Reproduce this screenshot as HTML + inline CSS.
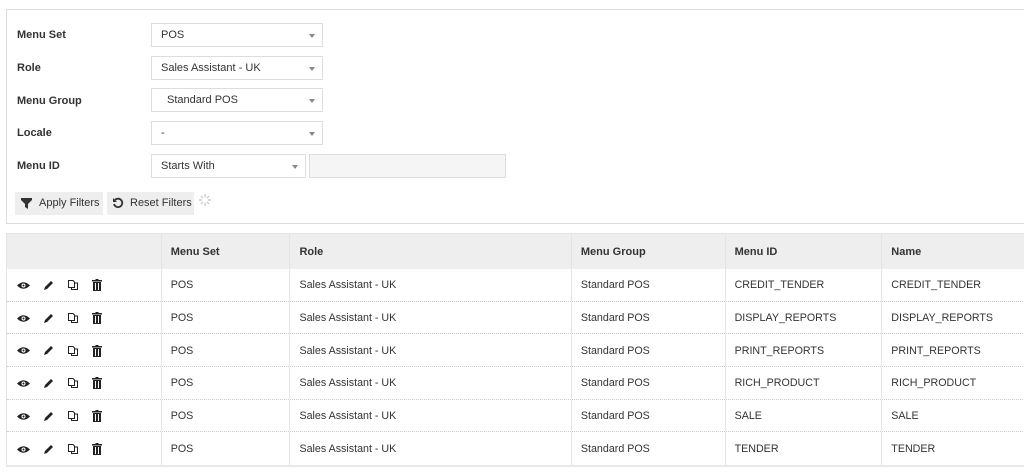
<!DOCTYPE html>
<html><head><meta charset="utf-8"><style>
*{box-sizing:border-box;margin:0;padding:0}
body{width:1024px;height:475px;background:#fff;font-family:"Liberation Sans",sans-serif;font-size:11px;color:#333;position:relative;overflow:hidden}
.panel{position:absolute;left:6px;top:9px;width:1030px;height:215px;border:1px solid #ddd}
.lbl{position:absolute;left:17px;font-weight:bold;font-size:11px;color:#333}
.sel{position:absolute;left:151px;width:172px;height:24px;border:1px solid #ddd;background:#fff;padding-left:9px;line-height:22px;font-size:11px}
.sel:after{content:"";position:absolute;right:7px;top:10px;border-left:3px solid transparent;border-right:3px solid transparent;border-top:4px solid #888}
.btn{position:absolute;top:192px;height:23px;background:#eee;line-height:23px;font-size:11px;padding-left:23px}
.tbl{position:absolute;left:6px;top:233px;width:1030px;border:1px solid #e4e4e4;border-bottom:2px solid #e8e8e8;font-size:10.7px}
.row{display:flex;height:32.7px;border-bottom:1px dotted #ccc;align-items:center}
.row:last-child{border-bottom:none}
.hd{height:35px;background:#eee;font-weight:bold;border-bottom:none;font-size:11px}
.c{height:100%;display:flex;align-items:center;padding-left:9px;border-right:1px solid #e4e4e4;padding-top:1px}
.c0{width:155px}.c1{width:129px}.c2{width:282px}.c3{width:154px}.c4{width:157px}.c5{width:153px;border-right:none}
.ic{display:flex;gap:13px;padding-left:10px;align-items:center}
</style></head><body>
<div class="panel"></div>
<div class="lbl" style="top:29px">Menu Set</div>
<div class="lbl" style="top:62px">Role</div>
<div class="lbl" style="top:95px">Menu Group</div>
<div class="lbl" style="top:127px">Locale</div>
<div class="lbl" style="top:160px">Menu ID</div>
<div class="sel" style="top:23px">POS</div>
<div class="sel" style="top:56px">Sales Assistant - UK</div>
<div class="sel" style="top:88px;padding-left:15px">Standard POS</div>
<div class="sel" style="top:121px">-</div>
<div class="sel" style="top:154px;width:155px">Starts With</div>
<div style="position:absolute;left:309px;top:154px;width:197px;height:24px;border:1px solid #ddd;background:#f5f5f5"></div>
<div class="btn" style="left:15px;width:88px;padding-left:24px"><svg style="position:absolute;left:6px;top:6px" width="11" height="11" viewBox="0 0 11 11"><path d="M0 0H11V2L7 6V11L4 9V6L0 2Z" fill="#333"/></svg>Apply Filters</div>
<div class="btn" style="left:107px;width:87px"><svg style="position:absolute;left:5px;top:5px" width="12" height="12" viewBox="0 0 12 12"><path d="M3 3A4.2 4.2 0 1 1 2 7" fill="none" stroke="#333" stroke-width="1.8"/><path d="M1 1V5H5Z" fill="#333"/></svg>Reset Filters</div>
<svg style="position:absolute;left:198px;top:193px" width="14" height="14" viewBox="0 0 14 14" stroke="#ccc" stroke-width="1.5"><path d="M7 1V4M7 10V13M1 7H4M10 7H13M3 3L5 5M9 9L11 11M11 3L9 5M5 9L3 11"/></svg>
<div class="tbl">
<div class="row hd"><div class="c c0"></div><div class="c c1">Menu Set</div><div class="c c2">Role</div><div class="c c3">Menu Group</div><div class="c c4">Menu ID</div><div class="c c5">Name</div></div>
<div class="row"><div class="c c0 ic"><svg width="13" height="9" viewBox="0 0 13 9"><path d="M0 4.5Q6.5-2 13 4.5Q6.5 11 0 4.5Z" fill="#222"/><circle cx="6.5" cy="4.5" r="2" fill="#fff"/><circle cx="6.5" cy="4.5" r="1" fill="#222"/></svg><svg width="11" height="11" viewBox="0 0 11 11"><path d="M1 10L2 7L8 1L10 3L4 9Z" fill="#222"/></svg><svg width="12" height="12" viewBox="0 0 12 12" fill="none" stroke="#222"><path d="M1.5 1.5H6L7.5 3V8.5H1.5Z"/><path d="M7.5 4H10.5V10.5H4.5V8.5"/></svg><svg width="10" height="12" viewBox="0 0 10 12" fill="#222"><rect x="0" y="1" width="10" height="1.5"/><rect x="3.5" y="0" width="3" height="1"/><rect x="1" y="3" width="8" height="9"/><rect x="3" y="4" width="1" height="7" fill="#fff"/><rect x="6" y="4" width="1" height="7" fill="#fff"/></svg></div><div class="c c1">POS</div><div class="c c2">Sales Assistant - UK</div><div class="c c3">Standard POS</div><div class="c c4">CREDIT_TENDER</div><div class="c c5">CREDIT_TENDER</div></div>
<div class="row"><div class="c c0 ic"><svg width="13" height="9" viewBox="0 0 13 9"><path d="M0 4.5Q6.5-2 13 4.5Q6.5 11 0 4.5Z" fill="#222"/><circle cx="6.5" cy="4.5" r="2" fill="#fff"/><circle cx="6.5" cy="4.5" r="1" fill="#222"/></svg><svg width="11" height="11" viewBox="0 0 11 11"><path d="M1 10L2 7L8 1L10 3L4 9Z" fill="#222"/></svg><svg width="12" height="12" viewBox="0 0 12 12" fill="none" stroke="#222"><path d="M1.5 1.5H6L7.5 3V8.5H1.5Z"/><path d="M7.5 4H10.5V10.5H4.5V8.5"/></svg><svg width="10" height="12" viewBox="0 0 10 12" fill="#222"><rect x="0" y="1" width="10" height="1.5"/><rect x="3.5" y="0" width="3" height="1"/><rect x="1" y="3" width="8" height="9"/><rect x="3" y="4" width="1" height="7" fill="#fff"/><rect x="6" y="4" width="1" height="7" fill="#fff"/></svg></div><div class="c c1">POS</div><div class="c c2">Sales Assistant - UK</div><div class="c c3">Standard POS</div><div class="c c4">DISPLAY_REPORTS</div><div class="c c5">DISPLAY_REPORTS</div></div>
<div class="row"><div class="c c0 ic"><svg width="13" height="9" viewBox="0 0 13 9"><path d="M0 4.5Q6.5-2 13 4.5Q6.5 11 0 4.5Z" fill="#222"/><circle cx="6.5" cy="4.5" r="2" fill="#fff"/><circle cx="6.5" cy="4.5" r="1" fill="#222"/></svg><svg width="11" height="11" viewBox="0 0 11 11"><path d="M1 10L2 7L8 1L10 3L4 9Z" fill="#222"/></svg><svg width="12" height="12" viewBox="0 0 12 12" fill="none" stroke="#222"><path d="M1.5 1.5H6L7.5 3V8.5H1.5Z"/><path d="M7.5 4H10.5V10.5H4.5V8.5"/></svg><svg width="10" height="12" viewBox="0 0 10 12" fill="#222"><rect x="0" y="1" width="10" height="1.5"/><rect x="3.5" y="0" width="3" height="1"/><rect x="1" y="3" width="8" height="9"/><rect x="3" y="4" width="1" height="7" fill="#fff"/><rect x="6" y="4" width="1" height="7" fill="#fff"/></svg></div><div class="c c1">POS</div><div class="c c2">Sales Assistant - UK</div><div class="c c3">Standard POS</div><div class="c c4">PRINT_REPORTS</div><div class="c c5">PRINT_REPORTS</div></div>
<div class="row"><div class="c c0 ic"><svg width="13" height="9" viewBox="0 0 13 9"><path d="M0 4.5Q6.5-2 13 4.5Q6.5 11 0 4.5Z" fill="#222"/><circle cx="6.5" cy="4.5" r="2" fill="#fff"/><circle cx="6.5" cy="4.5" r="1" fill="#222"/></svg><svg width="11" height="11" viewBox="0 0 11 11"><path d="M1 10L2 7L8 1L10 3L4 9Z" fill="#222"/></svg><svg width="12" height="12" viewBox="0 0 12 12" fill="none" stroke="#222"><path d="M1.5 1.5H6L7.5 3V8.5H1.5Z"/><path d="M7.5 4H10.5V10.5H4.5V8.5"/></svg><svg width="10" height="12" viewBox="0 0 10 12" fill="#222"><rect x="0" y="1" width="10" height="1.5"/><rect x="3.5" y="0" width="3" height="1"/><rect x="1" y="3" width="8" height="9"/><rect x="3" y="4" width="1" height="7" fill="#fff"/><rect x="6" y="4" width="1" height="7" fill="#fff"/></svg></div><div class="c c1">POS</div><div class="c c2">Sales Assistant - UK</div><div class="c c3">Standard POS</div><div class="c c4">RICH_PRODUCT</div><div class="c c5">RICH_PRODUCT</div></div>
<div class="row"><div class="c c0 ic"><svg width="13" height="9" viewBox="0 0 13 9"><path d="M0 4.5Q6.5-2 13 4.5Q6.5 11 0 4.5Z" fill="#222"/><circle cx="6.5" cy="4.5" r="2" fill="#fff"/><circle cx="6.5" cy="4.5" r="1" fill="#222"/></svg><svg width="11" height="11" viewBox="0 0 11 11"><path d="M1 10L2 7L8 1L10 3L4 9Z" fill="#222"/></svg><svg width="12" height="12" viewBox="0 0 12 12" fill="none" stroke="#222"><path d="M1.5 1.5H6L7.5 3V8.5H1.5Z"/><path d="M7.5 4H10.5V10.5H4.5V8.5"/></svg><svg width="10" height="12" viewBox="0 0 10 12" fill="#222"><rect x="0" y="1" width="10" height="1.5"/><rect x="3.5" y="0" width="3" height="1"/><rect x="1" y="3" width="8" height="9"/><rect x="3" y="4" width="1" height="7" fill="#fff"/><rect x="6" y="4" width="1" height="7" fill="#fff"/></svg></div><div class="c c1">POS</div><div class="c c2">Sales Assistant - UK</div><div class="c c3">Standard POS</div><div class="c c4">SALE</div><div class="c c5">SALE</div></div>
<div class="row"><div class="c c0 ic"><svg width="13" height="9" viewBox="0 0 13 9"><path d="M0 4.5Q6.5-2 13 4.5Q6.5 11 0 4.5Z" fill="#222"/><circle cx="6.5" cy="4.5" r="2" fill="#fff"/><circle cx="6.5" cy="4.5" r="1" fill="#222"/></svg><svg width="11" height="11" viewBox="0 0 11 11"><path d="M1 10L2 7L8 1L10 3L4 9Z" fill="#222"/></svg><svg width="12" height="12" viewBox="0 0 12 12" fill="none" stroke="#222"><path d="M1.5 1.5H6L7.5 3V8.5H1.5Z"/><path d="M7.5 4H10.5V10.5H4.5V8.5"/></svg><svg width="10" height="12" viewBox="0 0 10 12" fill="#222"><rect x="0" y="1" width="10" height="1.5"/><rect x="3.5" y="0" width="3" height="1"/><rect x="1" y="3" width="8" height="9"/><rect x="3" y="4" width="1" height="7" fill="#fff"/><rect x="6" y="4" width="1" height="7" fill="#fff"/></svg></div><div class="c c1">POS</div><div class="c c2">Sales Assistant - UK</div><div class="c c3">Standard POS</div><div class="c c4">TENDER</div><div class="c c5">TENDER</div></div>
</div>
</body></html>
